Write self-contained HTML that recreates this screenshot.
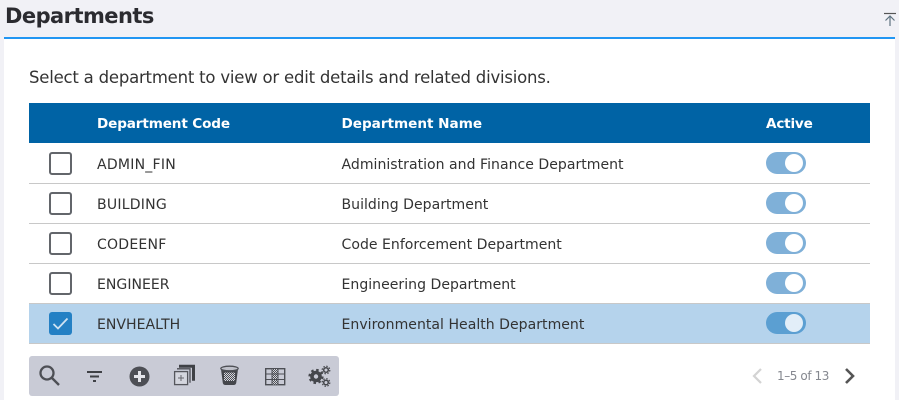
<!DOCTYPE html>
<html><head><meta charset="utf-8"><style>
html,body{margin:0;padding:0;width:899px;height:400px;overflow:hidden;background:#f1f1f6}
*{box-sizing:border-box}
.a{position:absolute;white-space:nowrap;line-height:20px;font-family:"DejaVu Sans","Liberation Sans",sans-serif;color:#333}
.c{font-size:14.05px;letter-spacing:.02px}
.d{letter-spacing:.22px}
.h{font-size:13.6px;font-weight:bold;color:#fff}
.line{position:absolute;left:29px;width:841px;height:1px;background:#c8c8c8}
.cb{position:absolute;left:49px;width:23px;height:23px;border:2px solid #63666b;border-radius:3px;background:#fff}
.tg{position:absolute;left:766px;width:40px;height:22px;border-radius:11px;background:#7fb0d8}
.tg i{position:absolute;left:19px;top:2px;width:18px;height:18px;border-radius:50%;background:#fff}
</style></head><body>
<div class="a" style="left:5px;top:1px;font-size:21px;font-weight:bold;line-height:30px;color:#2b2b30;letter-spacing:-.55px">Departments</div>
<svg style="position:absolute;left:883px;top:12px" width="14" height="16" viewBox="0 0 14 16"><path d="M1 1.500H13" stroke="#555" stroke-width="1.200"/><path d="M7 14V4M2.500 8.500L7 4l4.500 4.500" stroke="#5f7380" stroke-width="1.200" fill="none"/></svg>
<div style="position:absolute;left:4px;top:37px;width:891px;height:363px;background:#fff;border-top:2px solid #2196f3"></div>
<div class="a" style="left:29px;top:68px;font-size:16.5px;letter-spacing:-.21px;color:#333">Select a department to view or edit details and related divisions.</div>
<div style="position:absolute;left:29px;top:103px;width:841px;height:40px;background:#0063a5"></div>
<div class="a h" style="left:97px;top:114px;letter-spacing:-.15px">Department Code</div>
<div class="a h" style="left:341.500px;top:114px;letter-spacing:-.02px">Department Name</div>
<div class="a h" style="left:766px;top:114px;letter-spacing:-.2px">Active</div>

<div style="position:absolute;left:29px;top:304px;width:841px;height:39px;background:#b5d3ec"></div>
<div class="line" style="top:183px"></div><div class="line" style="top:223px"></div><div class="line" style="top:263px"></div><div class="line" style="top:303px"></div><div class="line" style="top:343px"></div>

<div class="cb" style="top:152px"></div><div class="a c d" style="left:97px;top:155px">ADMIN_FIN</div><div class="a c" style="left:341.500px;top:155px">Administration and Finance Department</div><div class="tg" style="top:152px"><i></i></div>
<div class="cb" style="top:192px"></div><div class="a c d" style="left:97px;top:195px">BUILDING</div><div class="a c" style="left:341.500px;top:195px">Building Department</div><div class="tg" style="top:192px"><i></i></div>
<div class="cb" style="top:232px"></div><div class="a c d" style="left:97px;top:235px">CODEENF</div><div class="a c" style="left:341.500px;top:235px">Code Enforcement Department</div><div class="tg" style="top:232px"><i></i></div>
<div class="cb" style="top:272px"></div><div class="a c" style="left:97px;top:275px">ENGINEER</div><div class="a c" style="left:341.500px;top:275px">Engineering Department</div><div class="tg" style="top:272px"><i></i></div>
<svg style="position:absolute;left:49px;top:312px" width="23" height="23" viewBox="0 0 23 23"><rect width="23" height="23" rx="3" fill="#2480c4"/><path d="M4.500 12l4.500 4.500L18.500 6.500" stroke="#cfe2f2" stroke-width="1.800" fill="none"/></svg>
<div class="a c" style="left:97px;top:315px">ENVHEALTH</div><div class="a c" style="left:341.500px;top:315px">Environmental Health Department</div>
<div class="tg" style="top:312px;background:#5b9fd2"><i style="background:#e2eef8"></i></div>

<div style="position:absolute;left:29px;top:356px;width:310px;height:40px;background:#c9cbd6;border-radius:3px"></div>
<svg style="position:absolute;left:29px;top:356px" width="310" height="40" viewBox="0 0 310 40">
<defs><pattern id="k" width="2" height="2" patternUnits="userSpaceOnUse"><rect width="2" height="2" fill="#4d4f55"/><rect width="1" height="1" fill="#d4d5dc"/><rect x="1" y="1" width="1" height="1" fill="#d4d5dc"/></pattern></defs>
<circle cx="18" cy="17" r="6.500" fill="none" stroke="#4d4f55" stroke-width="2.300"/><path d="M23 22l7 7" stroke="#4d4f55" stroke-width="2.400"/>
<path d="M58 16H73M61 20.500H70M64 25H67" stroke="#3f4146" stroke-width="2"/>
<circle cx="110.500" cy="20.500" r="10" fill="#4d4f55"/><path d="M110.500 15v11M105 20.500h11" stroke="#e4e5ea" stroke-width="3"/>
<path d="M150 10.300h14.500v14.500" fill="none" stroke="#3f4146" stroke-width="3"/><path d="M148 12.800h13v14" fill="none" stroke="#4d4f55" stroke-width="1.300"/>
<rect x="145.600" y="15.600" width="13" height="13" fill="#d4d6de" stroke="#55565c" stroke-width="1.300"/><path d="M152 19v6M149 22h6" stroke="#66676d" stroke-width="1"/>
<path d="M192 13h17l-1.800 14q-.5 2-2.500 2h-8.400q-2 0-2.500-2z" fill="#45474c"/><ellipse cx="200.500" cy="12.500" rx="8.700" ry="2.300" fill="#bfc1ca" stroke="#4d4f55" stroke-width="1.300"/>
<path d="M195 16.500h11v8.500h-11z" fill="url(#k)"/>
<rect x="236.700" y="12.700" width="19" height="16" fill="#c9cbd6" stroke="#4d4f55" stroke-width="1.400"/><rect x="243" y="13" width="6" height="15.500" fill="url(#k)"/><path d="M236 18h20M236 23.500h20M243 12.500v16M249 12.500v16" stroke="#4d4f55" stroke-width="1"/>
<g fill="none" stroke="#45474c"><circle cx="287" cy="20.500" r="4" stroke-width="3.600"/><circle cx="287" cy="20.500" r="6.500" stroke-width="2.200" stroke-dasharray="2.500 2.600"/><circle cx="297" cy="14" r="2.300" stroke-width="1.500"/><circle cx="297" cy="14" r="3.800" stroke-width="1.200" stroke-dasharray="1.500 1.500"/><circle cx="297" cy="26.500" r="2.300" stroke-width="1.500"/><circle cx="297" cy="26.500" r="3.800" stroke-width="1.200" stroke-dasharray="1.500 1.500"/></g>
</svg>
<svg style="position:absolute;left:750px;top:367px" width="14" height="18" viewBox="0 0 14 18"><path d="M11 2L4 9l7 7" fill="none" stroke="#d3d3d3" stroke-width="2.200"/></svg>
<div class="a" style="left:777px;top:366px;font-size:12px;color:#85888f;letter-spacing:-.42px">1–5 of 13</div>
<svg style="position:absolute;left:843px;top:367px" width="14" height="18" viewBox="0 0 14 18"><path d="M3 2l7 7-7 7" fill="none" stroke="#555" stroke-width="2.600"/></svg>
</body></html>
